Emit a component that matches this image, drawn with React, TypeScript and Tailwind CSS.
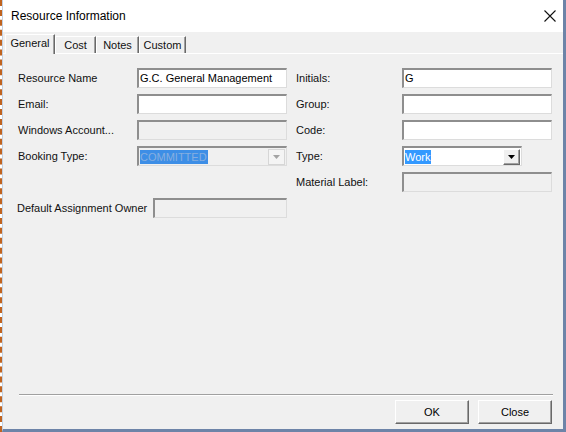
import React from "react";

const sunken =
  "border-t-2 border-l-2 border-r border-b border-t-[#8e8e8e] border-l-[#8e8e8e] border-r-[#dcdcdc] border-b-[#dcdcdc]";
const raised =
  "border border-t-white border-l-white border-r-[#696969] border-b-[#696969] shadow-[inset_-1px_-1px_0_#a0a0a0]";

function TextBox({ width, value, disabled }: { width: string; value?: string; disabled?: boolean }) {
  return (
    <div
      className={`h-[20px] shrink-0 ${width} ${sunken} ${
        disabled ? "bg-[#f0f0f0]" : "bg-white"
      } flex items-center pl-[1px] text-[11px] text-black overflow-hidden whitespace-nowrap`}
    >
      {value}
    </div>
  );
}

function Combo({ width, value, disabled }: { width: string; value: string; disabled?: boolean }) {
  return (
    <div className={`h-[20px] shrink-0 ${width} ${sunken} flex items-center ${disabled ? "bg-[#f0f0f0]" : "bg-white"}`}>
      <span
        className={`ml-[1px] h-[14px] leading-[14px] pr-[1px] text-[11px] ${
          disabled ? "bg-[#3d8ee6] text-[#86aee0]" : "bg-[#3399ff] text-white"
        }`}
      >
        {value}
      </span>
      <div className="flex-1" />
      <div
        className={`w-[17px] h-[16px] mr-[1px] flex items-center justify-center ${
          disabled ? "border border-[#d6d6d6] bg-[#f4f4f4]" : `${raised} bg-[#f0f0f0]`
        }`}
      >
        <svg width="7" height="4" viewBox="0 0 7 4">
          <path d="M0 0h7L3.5 4z" fill={disabled ? "#a3a3a3" : "#000"} />
        </svg>
      </div>
    </div>
  );
}

function Row({ label, labelW, children }: { label: string; labelW: string; children: React.ReactNode }) {
  return (
    <div className="flex items-center h-[20px]">
      <span className={`${labelW} shrink-0 whitespace-nowrap`}>{label}</span>
      {children}
    </div>
  );
}

function Tab({ label, width, active }: { label: string; width: string; active?: boolean }) {
  return (
    <div
      className={`${width} flex items-center justify-center bg-[#f0f0f0] border-t border-l border-r border-t-white border-l-white border-r-[#696969] shadow-[inset_-1px_0_0_#a0a0a0] ${
        active ? "h-[20px] -mb-px z-10 pb-[2px]" : "h-[17px]"
      }`}
    >
      {label}
    </div>
  );
}

export default function App() {
  return (
    <div className="w-[566px] h-[432px] flex bg-white font-['Liberation_Sans',Arial,sans-serif] text-[11px] text-[#111]">
      {/* something dashed behind the dialog */}
      <div className="w-[2px] h-full border-l-2 border-dashed border-[#c0631f]" />
      <div className="flex-1 flex flex-col border-l border-l-[#c3d1e2] border-r-[3px] border-b-[3px] border-r-[#6d84a8] border-b-[#6d84a8]">
        {/* Title bar */}
        <div className="h-[32px] bg-white flex items-center justify-between pl-[8px] pr-[7px]">
          <span className="text-[12px] text-black">Resource Information</span>
          <svg width="12" height="12" viewBox="0 0 12 12">
            <path d="M0.5 0.5L11.5 11.5M11.5 0.5L0.5 11.5" stroke="#111" strokeWidth="1.1" />
          </svg>
        </div>

        <div className="flex-1 flex flex-col bg-[#f0f0f0]">
          {/* Tabs */}
          <div className="flex items-end h-[20px] mt-px pl-[2px]">
            <Tab label="General" width="w-[50px]" active />
            <Tab label="Cost" width="w-[41px]" />
            <Tab label="Notes" width="w-[43px]" />
            <Tab label="Custom" width="w-[47px]" />
          </div>

          <div className="flex-1 flex flex-col border-t border-t-white">
            {/* Form */}
            <div className="flex pt-[14px] pl-[15px]">
              <div className="flex flex-col gap-[6px] w-[269px]">
                <Row label="Resource Name" labelW="w-[119px]">
                  <TextBox width="w-[150px]" value="G.C. General Management" />
                </Row>
                <Row label="Email:" labelW="w-[119px]">
                  <TextBox width="w-[150px]" />
                </Row>
                <Row label="Windows Account..." labelW="w-[119px]">
                  <TextBox width="w-[150px]" disabled />
                </Row>
                <Row label="Booking Type:" labelW="w-[119px]">
                  <Combo width="w-[150px]" value="COMMITTED" disabled />
                </Row>
                <div className="h-[20px]" />
                <div className="flex items-center h-[20px] -ml-px">
                  <span className="w-[136px] shrink-0 whitespace-nowrap">Default Assignment Owner</span>
                  <TextBox width="w-[134px]" disabled />
                </div>
              </div>

              <div className="flex flex-col gap-[6px] ml-[9px] w-[256px]">
                <Row label="Initials:" labelW="w-[106px]">
                  <TextBox width="w-[150px]" value="G" />
                </Row>
                <Row label="Group:" labelW="w-[106px]">
                  <TextBox width="w-[150px]" />
                </Row>
                <Row label="Code:" labelW="w-[106px]">
                  <TextBox width="w-[150px]" />
                </Row>
                <Row label="Type:" labelW="w-[106px]">
                  <Combo width="w-[120px]" value="Work" />
                </Row>
                <Row label="Material Label:" labelW="w-[106px]">
                  <TextBox width="w-[150px]" disabled />
                </Row>
              </div>
            </div>

            <div className="flex-1" />

            {/* Footer */}
            <div className="ml-[16px] mr-[10px] h-px bg-[#a0a0a0] border-b border-b-white box-content" />
            <div className="flex justify-end gap-[9px] pr-[11px] pt-[4px] pb-[5px]">
              <button className={`w-[74px] h-[24px] bg-[#f0f0f0] text-black ${raised}`}>OK</button>
              <button className={`w-[74px] h-[24px] bg-[#f0f0f0] text-black ${raised}`}>Close</button>
            </div>
          </div>
        </div>
      </div>
    </div>
  );
}
